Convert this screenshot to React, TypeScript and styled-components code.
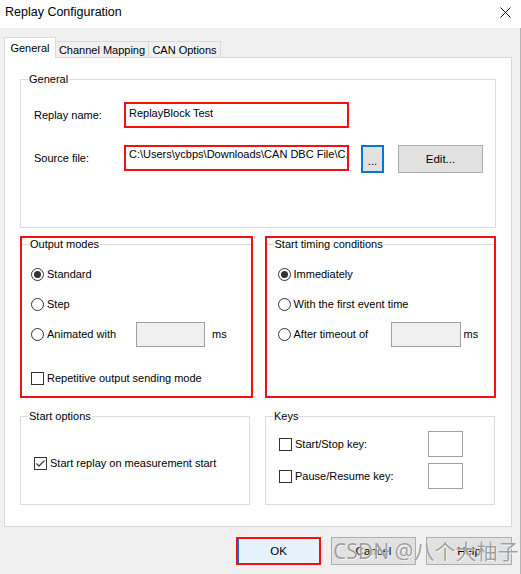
import React from 'react'
import styled, { createGlobalStyle } from 'styled-components'

const GlobalStyle = createGlobalStyle`
  html, body {
    margin: 0;
    padding: 0;
    background: #f0f0f0;
  }
  body {
    font-family: "Liberation Sans", Arial, sans-serif;
    font-size: 11px;
    color: #000;
  }
`

const RED = '#f50f0f'

const Window = styled.div`
  position: relative;
  width: 521px;
  height: 574px;
  display: flex;
  flex-direction: column;
  overflow: hidden;
`

const TitleBar = styled.div`
  height: 28px;
  flex: none;
  background: #fff;
  display: flex;
  align-items: flex-start;
  justify-content: space-between;
  padding: 5px 10px 0 5px;
  box-sizing: border-box;
`

const Title = styled.div`
  font-size: 12.5px;
  line-height: 15px;
`

const CloseBtn = styled.div`
  width: 11px;
  height: 11px;
  margin-top: 2px;
  display: flex;
`

const Client = styled.div`
  flex: 1;
  display: flex;
  flex-direction: column;
  padding: 9px 8px 0 4px;
  border-right: 1px solid #b4b4b4;
`

const TabRow = styled.div`
  display: flex;
  align-items: flex-end;
  height: 20px;
`

const Tab = styled.div<{ $active?: boolean; $w: number }>`
  position: relative;
  z-index: ${p => (p.$active ? 1 : 0)};
  width: ${p => p.$w}px;
  height: ${p => (p.$active ? 21 : 16)}px;
  margin-bottom: ${p => (p.$active ? -1 : 0)}px;
  box-sizing: border-box;
  border: 1px solid #d9d9d9;
  border-bottom: none;
  border-left: ${p => (p.$active ? '1px solid #d9d9d9' : 'none')};
  background: ${p => (p.$active ? '#fff' : '#f0f0f0')};
  display: flex;
  align-items: center;
  justify-content: center;
  white-space: nowrap;
  font-size: 11px;
`

const Panel = styled.div`
  height: 470px;
  box-sizing: border-box;
  border: 1px solid #d9d9d9;
  background: #fff;
  padding: 15px 15px 0 15px;
  display: flex;
  flex-direction: column;
`

const Group = styled.fieldset<{ $h: number; $w?: number }>`
  margin: 0;
  padding: 0;
  min-width: 0;
  width: ${p => (p.$w ? `${p.$w}px` : 'auto')};
  height: ${p => p.$h}px;
  box-sizing: border-box;
  border: 1px solid #dcdcdc;
`

const Legend = styled.legend`
  margin-left: 7px;
  padding: 0 1px;
  line-height: 13px;
`

const GroupBody = styled.div<{ $pad: string }>`
  padding: ${p => p.$pad};
`

const Columns = styled.div<{ $top: number; $gap: number }>`
  display: flex;
  gap: ${p => p.$gap}px;
  margin-top: ${p => p.$top}px;
`

const Highlight = styled.div<{ $w: number }>`
  width: ${p => p.$w}px;
  height: 162px;
  box-sizing: border-box;
  border: 2px solid ${RED};
`

const InnerGroup = styled.fieldset`
  margin: 0;
  padding: 0;
  min-width: 0;
  height: 100%;
  box-sizing: border-box;
  border: none;
  border-top: 1px solid #dcdcdc;
`

const FieldRow = styled.div<{ $top?: number }>`
  display: flex;
  align-items: flex-start;
  margin-top: ${p => p.$top ?? 0}px;
`

const FieldLabel = styled.div`
  width: 90px;
  height: 26px;
  display: flex;
  align-items: center;
  flex: none;
`

const TextBox = styled.div<{ $padTop: number }>`
  width: 225px;
  height: 26px;
  box-sizing: border-box;
  border: 2px solid ${RED};
  padding: ${p => p.$padTop}px 2px 0 3px;
  line-height: 15px;
  white-space: nowrap;
  overflow: hidden;
  flex: none;
`

const PushButton = styled.div<{ $w: number; $h: number; $left?: number; $variant?: 'focus' | 'ok' }>`
  width: ${p => p.$w}px;
  height: ${p => p.$h}px;
  margin-left: ${p => p.$left ?? 0}px;
  box-sizing: border-box;
  flex: none;
  display: flex;
  align-items: center;
  justify-content: center;
  background: ${p => (p.$variant === 'ok' ? '#e5f1fb' : '#e1e1e1')};
  border: ${p =>
    p.$variant === 'focus'
      ? '2px solid #0078d7'
      : p.$variant === 'ok'
      ? `2px solid ${RED}`
      : '1px solid #adadad'};
  box-shadow: ${p => (p.$variant === 'ok' ? 'inset 1px 0 0 #0078d7' : 'none')};
  font-size: 11.5px;
`

const Dots = styled.span`
  margin-top: 4px;
`

const OptionRow = styled.div<{ $h: number; $top?: number }>`
  display: flex;
  align-items: center;
  height: ${p => p.$h}px;
  margin-top: ${p => p.$top ?? 0}px;
`

const OptionLabel = styled.div<{ $w?: number }>`
  display: flex;
  align-items: center;
  gap: 3px;
  flex: none;
  width: ${p => (p.$w ? `${p.$w}px` : 'auto')};
  white-space: nowrap;
`

const Radio = styled.span<{ $on?: boolean }>`
  width: 13px;
  height: 13px;
  box-sizing: border-box;
  border: 1px solid #333;
  border-radius: 50%;
  background: #fff;
  display: inline-flex;
  align-items: center;
  justify-content: center;
  flex: none;
  &::after {
    content: '';
    width: 7px;
    height: 7px;
    border-radius: 50%;
    background: #333;
    display: ${p => (p.$on ? 'block' : 'none')};
  }
`

const Box = styled.span`
  width: 13px;
  height: 13px;
  box-sizing: border-box;
  border: 1px solid #333;
  background: #fff;
  display: inline-flex;
  flex: none;
`

const MsBox = styled.div<{ $w: number }>`
  width: ${p => p.$w}px;
  height: 25px;
  box-sizing: border-box;
  border: 1px solid #a0a0a0;
  background: #f0f0f0;
  flex: none;
`

const Unit = styled.span<{ $left: number }>`
  margin-left: ${p => p.$left}px;
`

const KeyBox = styled.div`
  width: 35px;
  height: 26px;
  box-sizing: border-box;
  border: 1px solid #a0a0a0;
  background: #fff;
  flex: none;
`

const ButtonRow = styled.div`
  display: flex;
  justify-content: flex-end;
  gap: 10px;
  margin-top: 10px;
`

const Watermark = styled.div`
  position: absolute;
  left: 333px;
  top: 538px;
  font-family: "Noto Sans", "Noto Sans CJK SC", sans-serif;
  font-size: 21px;
  line-height: 26px;
  color: rgba(135, 135, 135, 0.8);
  text-shadow: 0 0 1px #fff, 1px 1px 0 rgba(255, 255, 255, 0.6);
  white-space: nowrap;
  pointer-events: none;
`

const Check: React.FC<{ on?: boolean }> = ({ on }) => (
  <Box>
    {on && (
      <svg width="11" height="11" viewBox="0 0 11 11">
        <polyline points="1.5,5.5 4,8 9.5,2.5" fill="none" stroke="#444" strokeWidth="1.3" />
      </svg>
    )}
  </Box>
)

const SOURCE = 'C:\\Users\\ycbps\\Downloads\\CAN DBC File\\C.dbc'

export default function App() {
  return (
    <>
      <GlobalStyle />
      <Window>
        <TitleBar>
          <Title>Replay Configuration</Title>
          <CloseBtn>
            <svg width="11" height="11" viewBox="0 0 11 11">
              <path d="M0.5 0.5 L10.5 10.5 M10.5 0.5 L0.5 10.5" stroke="#111" strokeWidth="1" />
            </svg>
          </CloseBtn>
        </TitleBar>
        <Client>
          <TabRow>
            <Tab $active $w={52}>General</Tab>
            <Tab $w={93}>Channel Mapping</Tab>
            <Tab $w={72}>CAN Options</Tab>
          </TabRow>
          <Panel>
            <Group $h={155}>
              <Legend>General</Legend>
              <GroupBody $pad="16px 0 0 13px">
                <FieldRow>
                  <FieldLabel>Replay name:</FieldLabel>
                  <TextBox $padTop={2}>ReplayBlock Test</TextBox>
                </FieldRow>
                <FieldRow $top={17}>
                  <FieldLabel>Source file:</FieldLabel>
                  <TextBox $padTop={0}>{SOURCE}</TextBox>
                  <PushButton $w={23} $h={28} $left={12} $variant="focus">
                    <Dots>...</Dots>
                  </PushButton>
                  <PushButton $w={85} $h={28} $left={14}>Edit...</PushButton>
                </FieldRow>
              </GroupBody>
            </Group>

            <Columns $top={8} $gap={12}>
              <Highlight $w={233}>
                <InnerGroup>
                  <Legend>Output modes</Legend>
                  <GroupBody $pad="8px 0 0 9px">
                    <OptionRow $h={30}>
                      <OptionLabel><Radio $on />Standard</OptionLabel>
                    </OptionRow>
                    <OptionRow $h={30}>
                      <OptionLabel><Radio />Step</OptionLabel>
                    </OptionRow>
                    <OptionRow $h={30}>
                      <OptionLabel $w={105}><Radio />Animated with</OptionLabel>
                      <MsBox $w={69} />
                      <Unit $left={7}>ms</Unit>
                    </OptionRow>
                    <OptionRow $h={14} $top={22}>
                      <OptionLabel><Check />Repetitive output sending mode</OptionLabel>
                    </OptionRow>
                  </GroupBody>
                </InnerGroup>
              </Highlight>
              <Highlight $w={232}>
                <InnerGroup>
                  <Legend>Start timing conditions</Legend>
                  <GroupBody $pad="8px 0 0 11px">
                    <OptionRow $h={30}>
                      <OptionLabel><Radio $on />Immediately</OptionLabel>
                    </OptionRow>
                    <OptionRow $h={30}>
                      <OptionLabel><Radio />With the first event time</OptionLabel>
                    </OptionRow>
                    <OptionRow $h={30}>
                      <OptionLabel $w={113}><Radio />After timeout of</OptionLabel>
                      <MsBox $w={70} />
                      <Unit $left={3}>ms</Unit>
                    </OptionRow>
                  </GroupBody>
                </InnerGroup>
              </Highlight>
            </Columns>

            <Columns $top={12} $gap={15}>
              <Group $w={230} $h={95}>
                <Legend>Start options</Legend>
                <GroupBody $pad="33px 0 0 13px">
                  <OptionRow $h={14}>
                    <OptionLabel><Check on />Start replay on measurement start</OptionLabel>
                  </OptionRow>
                </GroupBody>
              </Group>
              <Group $w={230} $h={95}>
                <Legend>Keys</Legend>
                <GroupBody $pad="8px 0 0 13px">
                  <OptionRow $h={26}>
                    <OptionLabel $w={149}><Check />Start/Stop key:</OptionLabel>
                    <KeyBox />
                  </OptionRow>
                  <OptionRow $h={26} $top={6}>
                    <OptionLabel $w={149}><Check />Pause/Resume key:</OptionLabel>
                    <KeyBox />
                  </OptionRow>
                </GroupBody>
              </Group>
            </Columns>
          </Panel>
          <ButtonRow>
            <PushButton $w={85} $h={28} $variant="ok">OK</PushButton>
            <PushButton $w={85} $h={28}>Cancel</PushButton>
            <PushButton $w={86} $h={28}>Help</PushButton>
          </ButtonRow>
        </Client>
        <Watermark>CSDN @八个大柚子</Watermark>
      </Window>
    </>
  )
}
